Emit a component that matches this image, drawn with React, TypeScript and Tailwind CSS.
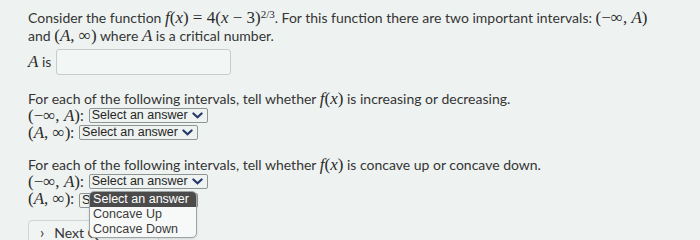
import type { ReactNode } from "react";

const mathFont = { fontFamily: '"Liberation Serif", "DejaVu Serif", serif' };
const selectFont = { fontFamily: '"Liberation Sans", Arial, sans-serif' };

function M({ children }: { children: ReactNode }): JSX.Element {
  return (
    <span className="text-[17px] text-[#2a2a2a]" style={mathFont}>
      {children}
    </span>
  );
}

function I({ children }: { children: ReactNode }): JSX.Element {
  return <i>{children}</i>;
}

function Chevron(): JSX.Element {
  return (
    <svg width="11" height="7" viewBox="0 0 11 7" className="shrink-0">
      <path d="M1.4 1.4 5.5 5.3 9.6 1.4" fill="none" stroke="#25386a" strokeWidth="2.1" strokeLinecap="round" />
    </svg>
  );
}

function SelectBox(): JSX.Element {
  return (
    <span
      className="inline-flex h-[15px] items-center gap-[4px] rounded-[2px] border border-[#8e9593] bg-[#eef2f0] pl-[2px] pr-[4px] text-[12.5px] leading-none text-[#262626]"
      style={selectFont}
    >
      Select an answer
      <Chevron />
    </span>
  );
}

function Row({ label, children }: { label: ReactNode; children: ReactNode }): JSX.Element {
  return (
    <div className="flex h-[17px] items-center gap-[5px]">
      <span className="leading-none">
        {label}
        <span className="text-[15px]">:</span>
      </span>
      {children}
    </div>
  );
}

export default function App(): JSX.Element {
  return (
    <div
      className="h-[240px] w-[700px] overflow-hidden bg-[#eef3f1] pl-7 pt-[9px] text-[14px] text-[#353535]"
      style={{ fontFamily: 'Lato, "Open Sans", sans-serif' }}
    >
      <p className="leading-[18px]">
        Consider the function{" "}
        <M>
          <I>f</I>(<I>x</I>) = 4(<I>x</I> − 3)
          <sup className="text-[11px]">2/3</sup>
        </M>
        . For this function there are two important intervals:{" "}
        <M>
          (−∞, <I>A</I>)
        </M>
        <br />
        and{" "}
        <M>
          (<I>A</I>, ∞)
        </M>{" "}
        where{" "}
        <M>
          <I>A</I>
        </M>{" "}
        is a critical number.
      </p>

      <div className="mt-[4px] flex items-center gap-[5px]">
        <span>
          <M>
            <I>A</I>
          </M>{" "}
          is
        </span>
        <div className="h-[26px] w-[175px] rounded-[3px] border border-[#c6cdcb] bg-[#f2f6f4]" />
      </div>

      <p className="mt-[15px] leading-[17px]">
        For each of the following intervals, tell whether{" "}
        <M>
          <I>f</I>(<I>x</I>)
        </M>{" "}
        is increasing or decreasing.
      </p>
      <Row
        label={
          <M>
            (−∞, <I>A</I>)
          </M>
        }
      >
        <SelectBox />
      </Row>
      <Row
        label={
          <M>
            (<I>A</I>, ∞)
          </M>
        }
      >
        <SelectBox />
      </Row>

      <p className="mt-[15px] leading-[17px]">
        For each of the following intervals, tell whether{" "}
        <M>
          <I>f</I>(<I>x</I>)
        </M>{" "}
        is concave up or concave down.
      </p>
      <Row
        label={
          <M>
            (−∞, <I>A</I>)
          </M>
        }
      >
        <SelectBox />
      </Row>
      <Row
        label={
          <M>
            (<I>A</I>, ∞)
          </M>
        }
      >
        <span className="relative">
          <SelectBox />
          <div
            className="absolute left-[10px] top-[3px] z-10 w-[108px] overflow-hidden rounded-[5px] border border-[#9ea4a6] bg-[#f7f8f8] text-[12.5px] leading-[15px] text-[#3a3a3a] shadow-sm"
            style={selectFont}
          >
            <div className="bg-[#4b4b4b] px-[3px] text-white">Select an answer</div>
            <div className="px-[3px]">Concave Up</div>
            <div className="px-[3px]">Concave Down</div>
          </div>
        </span>
      </Row>

      <div className="mt-[13px] inline-flex h-[24px] items-center gap-[10px] rounded-[4px] border border-[#cfd6d4] bg-[#f0f4f2] pl-[11px] pr-[14px] text-[14px] text-[#353535]">
        <span className="text-[15px] leading-none">›</span>
        <span>Next Question</span>
      </div>
    </div>
  );
}
